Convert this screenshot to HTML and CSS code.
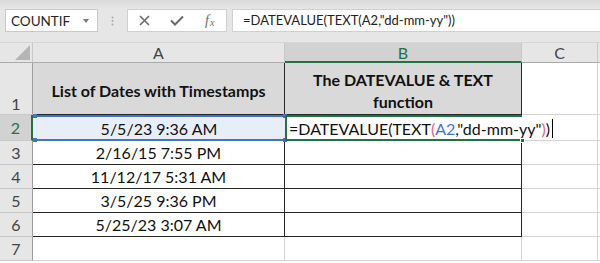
FILE: index.html
```html
<!DOCTYPE html>
<html>
<head>
<meta charset="utf-8">
<link rel="stylesheet" href="styles.css">
</head>
<body>
<div class="toolbar">
  <div class="namebox"><span>COUNTIF</span><span class="caret"></span></div>
  <div class="grip"><svg width="3" height="10" viewBox="0 0 3 10"><circle cx="1.5" cy="1.5" r="1" fill="#a8a8a8"/><circle cx="1.5" cy="5" r="1" fill="#a8a8a8"/><circle cx="1.5" cy="8.5" r="1" fill="#a8a8a8"/></svg></div>
  <div class="fbtns">
    <span class="btn"><svg width="11" height="11" viewBox="0 0 11 11"><path d="M1 1L10 10M10 1L1 10" stroke="#6a6a6a" stroke-width="1.6" fill="none"/></svg></span>
    <span class="btn"><svg width="14" height="11" viewBox="0 0 14 11"><path d="M1 5.5L5 9.5L13 1.5" stroke="#6a6a6a" stroke-width="2" fill="none"/></svg></span>
    <span class="btn fx"><i>f</i><span class="fxx">x</span></span>
  </div>
  <div class="fbar">=DATEVALUE(TEXT(A2,"dd-mm-yy"))</div>
</div>
<div class="sheet">
  <div class="corner"><svg width="17" height="17" viewBox="0 0 17 17"><path d="M16 1L16 16L1 16Z" fill="#b5b5b5"/></svg></div>
  <div class="ch">A</div>
  <div class="ch sel">B</div>
  <div class="ch">C</div>
  <div class="ch end"></div>

  <div class="rh r1">1</div>
  <div class="c t hd">List of Dates with Timestamps</div>
  <div class="c t hd two">The DATEVALUE &amp; TEXT<br>function</div>
  <div class="c"></div>
  <div class="c end"></div>

  <div class="rh rsel">2</div>
  <div class="c t a2">5/5/23 9:36 AM<span class="hdl h1"></span><span class="hdl h2"></span><span class="hdl h3"></span><span class="hdl h4"></span></div>
  <div class="c b2"><span class="ftxt">=DATEVALUE(TEXT<span class="pk">(</span><span class="bl">A2</span>,"dd-mm-yy"<span class="pk">)</span>)</span><span class="cursor"></span><span class="ghdl"></span></div>
  <div class="c c2"></div>
  <div class="c end"></div>

  <div class="rh">3</div>
  <div class="c t">2/16/15 7:55 PM</div>
  <div class="c t"></div>
  <div class="c"></div>
  <div class="c end"></div>

  <div class="rh">4</div>
  <div class="c t">11/12/17 5:31 AM</div>
  <div class="c t"></div>
  <div class="c"></div>
  <div class="c end"></div>

  <div class="rh">5</div>
  <div class="c t">3/5/25 9:36 PM</div>
  <div class="c t"></div>
  <div class="c"></div>
  <div class="c end"></div>

  <div class="rh">6</div>
  <div class="c t">5/25/23 3:07 AM</div>
  <div class="c t"></div>
  <div class="c"></div>
  <div class="c end"></div>

  <div class="rh">7</div>
  <div class="c"></div>
  <div class="c"></div>
  <div class="c"></div>
  <div class="c end"></div>
</div>
</body>
</html>
```
FILE: styles.css
```css
* { box-sizing: border-box; }
html, body { margin: 0; padding: 0; }
body {
  width: 600px;
  height: 263px;
  overflow: hidden;
  background: #ffffff;
  font-family: Lato, "Liberation Sans", sans-serif;
  color: #111;
}
.toolbar {
  height: 43px;
  background: linear-gradient(#d8d8d8, #e6e6e6 8px);
  display: flex;
  align-items: flex-start;
  padding: 9px 0 0 5px;
  border-bottom: 1px solid #d6d6d6;
}
.namebox {
  width: 93px;
  height: 23px;
  background: #fff;
  border: 1px solid #c8c8c8;
  display: flex;
  align-items: center;
  justify-content: space-between;
  padding: 0 8px 0 5px;
  font-size: 13.5px;
  color: #262626;
}
.caret {
  width: 0;
  height: 0;
  border-left: 3px solid transparent;
  border-right: 3px solid transparent;
  border-top: 4px solid #7a7a7a;
}
.grip {
  width: 29px;
  display: flex;
  justify-content: center;
  padding-top: 7px;
}
.fbtns {
  width: 100px;
  height: 23px;
  background: #fff;
  border: 1px solid #d0d0d0;
  display: flex;
  align-items: center;
}
.btn {
  width: 33px;
  display: flex;
  justify-content: center;
  align-items: center;
}
.fx {
  font-family: "Liberation Serif", serif;
  color: #6a6a6a;
  font-size: 14px;
}
.fx i { font-style: italic; }
.fxx { font-style: italic; font-size: 10px; margin-left: 1px; margin-top: 4px; }
.fbar {
  flex: 1;
  margin-left: 5px;
  height: 23px;
  background: #fff;
  border: 1px solid #d0d0d0;
  border-right: none;
  padding-left: 10px;
  font-size: 13px;
  line-height: 21px;
  color: #222;
}
.sheet {
  display: grid;
  grid-template-columns: 33px 252px 237px 76px 2px;
  grid-template-rows: 20px 52px 26px 24px 24px 24px 24px 24px;
}
.corner {
  background: #e6e6e6;
  border-right: 1px solid #c8c8c8;
  border-bottom: 1px solid #ababab;
  display: flex;
  align-items: flex-end;
  justify-content: flex-end;
  padding: 0 1px 1px 0;
}
.ch {
  background: #e6e6e6;
  border-right: 1px solid #c8c8c8;
  border-bottom: 1px solid #ababab;
  display: flex;
  align-items: center;
  justify-content: center;
  font-size: 16px;
  color: #444;
}
.ch.sel {
  background: #d2d2d2;
  color: #217346;
  border-bottom: 2px solid #217346;
}
.ch.end { border-right: none; }
.rh {
  background: #e6e6e6;
  border-right: 1px solid #9e9e9e;
  border-bottom: 1px solid #c8c8c8;
  display: flex;
  align-items: center;
  justify-content: center;
  font-size: 16px;
  color: #444;
}
.rh.r1 { align-items: flex-end; padding-bottom: 1px; }
.rh.rsel {
  background: #d2d2d2;
  color: #217346;
  border-right: 2px solid #217346;
}
.c {
  border-right: 1px solid #d4d4d4;
  border-bottom: 1px solid #d4d4d4;
  display: flex;
  align-items: center;
  justify-content: center;
  font-size: 16px;
  color: #111;
}
.c.end { border-right: none; }
.c.t {
  border-right-color: #262626;
  border-bottom-color: #262626;
}
.c.hd {
  background: #d9d9d9;
  font-weight: bold;
  text-align: center;
  line-height: 22px;
  padding-top: 4px;
}
.a2 {
  position: relative;
  background: #e8eef8;
  border-top: 2px solid #4472c4;
  border-bottom: 2px solid #4472c4 !important;
  border-right: none !important;
}
.hdl {
  position: absolute;
  width: 4px;
  height: 4px;
  background: #4472c4;
}
.h1 { left: 0; top: -3px; }
.h2 { right: -2px; top: -3px; }
.h3 { left: 0; bottom: -3px; }
.h4 { right: -2px; bottom: -3px; }
.b2 {
  position: relative;
  z-index: 1;
  border: 2px solid #217346;
  border-right: none;
  justify-content: flex-start;
  padding-left: 2px;
  white-space: nowrap;
  overflow: visible;
}
.ftxt { flex-shrink: 0; }
.pk { color: #e0637a; }
.bl { color: #3f78d8; }
.cursor {
  flex-shrink: 0;
  display: block;
  width: 1px;
  height: 19px;
  background: #000;
  margin-left: 2px;
}
.ghdl {
  position: absolute;
  right: -3px;
  bottom: -4px;
  width: 5px;
  height: 5px;
  background: #217346;
  border: 1px solid #fff;
}
.c2 { border-bottom-color: #d4d4d4; }
```
